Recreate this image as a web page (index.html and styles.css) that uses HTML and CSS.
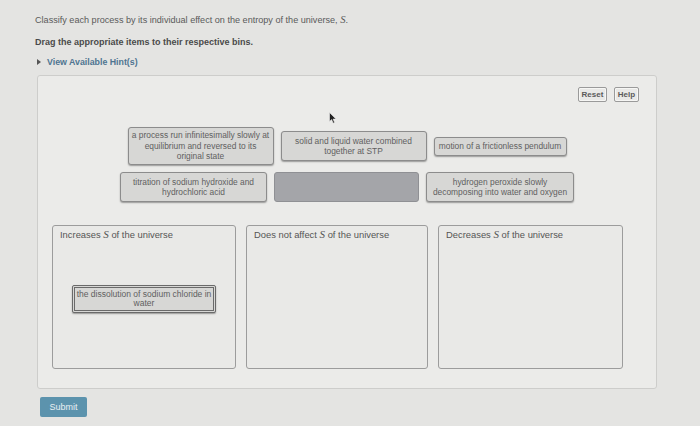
FILE: index.html
```html
<!DOCTYPE html>
<html>
<head>
<meta charset="utf-8">
<link rel="stylesheet" href="styles.css">
</head>
<body>
<div class="page">
  <p class="intro">Classify each process by its individual effect on the entropy of the universe, <span class="math">S</span>.</p>
  <p class="instr">Drag the appropriate items to their respective bins.</p>
  <p class="hint"><span class="tri"></span><span class="hint-text">View Available Hint(s)</span></p>

  <div class="panel">
    <div class="toolbar">
      <span class="tbtn reset">Reset</span>
      <span class="tbtn help">Help</span>
    </div>

    <div class="row row1">
      <div class="item w146 h38">a process run infinitesimally slowly at equilibrium and reversed to its original state</div>
      <div class="item w146 h30 wide-pad">solid and liquid water combined together at STP</div>
      <div class="item w133 h19">motion of a frictionless pendulum</div>
    </div>
    <div class="row row2">
      <div class="item w147 h30">titration of sodium hydroxide and hydrochloric acid</div>
      <div class="slot w145 h30"></div>
      <div class="item w148 h30">hydrogen peroxide slowly decomposing into water and oxygen</div>
    </div>

    <div class="bins">
      <div class="bin b1">
        <div class="bin-title">Increases <span class="math">S</span> of the universe</div>
        <div class="item placed">the dissolution of sodium chloride in water</div>
      </div>
      <div class="bin b2">
        <div class="bin-title">Does not affect <span class="math">S</span> of the universe</div>
      </div>
      <div class="bin b3">
        <div class="bin-title">Decreases <span class="math">S</span> of the universe</div>
      </div>
    </div>

    <svg class="cursor" width="8" height="12" viewBox="0 0 8 12"><path d="M0.5 0.5 L0.5 9.5 L2.6 7.6 L4.2 11.2 L5.6 10.6 L4.1 7.1 L7 7.1 Z" fill="#222" stroke="#eee" stroke-width="0.6"/></svg>
  </div>

  <div class="submit">Submit</div>
</div>
</body>
</html>
```
FILE: styles.css
```css
* { box-sizing: border-box; }
html, body { margin: 0; padding: 0; }
body {
  background: #e4e4e2;
  font-family: "Liberation Sans", Arial, sans-serif;
  color: #555;
  width: 700px;
  height: 426px;
  overflow: hidden;
}
.page {
  padding: 13px 0 0 35px;
}
p { margin: 0; }
.intro {
  font-size: 9.1px;
  line-height: 12px;
  height: 12px;
  color: #5a5a5a;
  margin-bottom: 11px;
}
.math {
  font-family: "Liberation Serif", "Times New Roman", serif;
  font-style: italic;
  font-size: 1.18em;
}
.instr {
  font-size: 9px;
  font-weight: bold;
  line-height: 12px;
  height: 12px;
  color: #4a4a4a;
  margin-bottom: 8px;
}
.hint {
  display: flex;
  align-items: center;
  height: 12px;
  margin-bottom: 7px;
}
.tri {
  width: 0;
  height: 0;
  border-left: 4px solid #555;
  border-top: 3px solid transparent;
  border-bottom: 3px solid transparent;
  margin-left: 2px;
  margin-right: 6px;
}
.hint-text {
  font-size: 8.8px;
  font-weight: bold;
  color: #4f7591;
  line-height: 12px;
}
.panel {
  position: relative;
  margin-left: 2px;
  width: 620px;
  height: 314px;
  border: 1px solid #cdcdcb;
  border-radius: 3px;
  background: #ebebe9;
  padding-top: 11px;
}
.toolbar {
  display: flex;
  justify-content: flex-end;
  gap: 7px;
  padding-right: 17px;
  height: 15px;
}
.tbtn {
  display: flex;
  align-items: center;
  justify-content: center;
  height: 15px;
  border: 1px solid #9a9a9a;
  border-radius: 2px;
  box-shadow: inset 0 0 0 1px #f6f6f4;
  background: #e9e9e7;
  font-size: 8px;
  font-weight: bold;
  color: #5a5a5a;
}
.reset { width: 29px; }
.help { width: 25px; }

.row {
  display: flex;
  justify-content: center;
  align-items: center;
  gap: 7px;
}
.row1 { margin-top: 25px; height: 38px; }
.row2 { margin-top: 7px; height: 30px; }

.item {
  display: flex;
  align-items: center;
  justify-content: center;
  text-align: center;
  background: #d7d7d5;
  border: 1px solid #8c8c8c;
  border-radius: 3px;
  box-shadow: 0 1px 1.5px rgba(0, 0, 0, 0.35);
  font-size: 8.4px;
  line-height: 10.5px;
  color: #606060;
  padding: 0 3px;
}
.item.wide-pad { padding: 0 10px; }
.slot {
  background: #a4a5a9;
  border: 1px solid #8f9094;
  border-radius: 3px;
}
.w133 { width: 133px; }
.w145 { width: 145px; }
.w146 { width: 146px; }
.w147 { width: 147px; }
.w148 { width: 148px; }
.h19 { height: 19px; }
.h30 { height: 30px; }
.h38 { height: 38px; }

.bins {
  display: flex;
  gap: 10px;
  margin-top: 23px;
  padding-left: 14px;
}
.bin {
  height: 144px;
  border: 1px solid #9c9c9c;
  border-radius: 3px;
  background: #e9e9e7;
  display: flex;
  flex-direction: column;
  align-items: center;
}
.b1 { width: 184px; }
.b2 { width: 182px; }
.b3 { width: 185px; }
.bin-title {
  align-self: stretch;
  padding: 3px 0 0 7px;
  font-size: 9.4px;
  line-height: 11px;
  color: #555;
}
.item.placed {
  width: 144px;
  height: 28px;
  margin-top: 45px;
  border: 3px double #6a6a6a;
  border-radius: 2px;
  font-size: 8.5px;
  line-height: 9.5px;
  padding: 0;
}
.cursor {
  position: absolute;
  left: 291px;
  top: 36px;
}
.submit {
  margin: 8px 0 0 5px;
  width: 47px;
  height: 20px;
  display: flex;
  align-items: center;
  justify-content: center;
  background: #5c93ad;
  border-radius: 2px;
  color: #e9f0f3;
  font-size: 9px;
}
```
